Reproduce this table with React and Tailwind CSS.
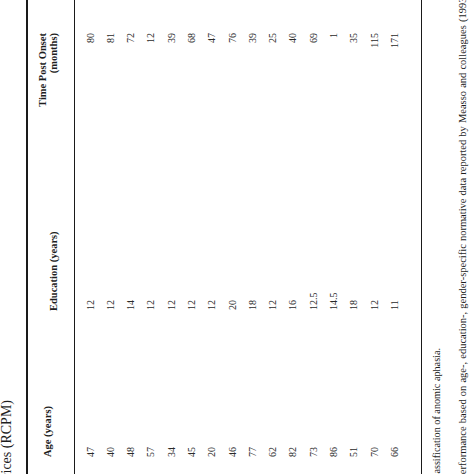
import React from 'react';

const rows = [
  ['47', '12', '80'],
  ['40', '12', '81'],
  ['48', '14', '72'],
  ['57', '12', '12'],
  ['34', '12', '39'],
  ['45', '12', '68'],
  ['20', '12', '47'],
  ['46', '20', '76'],
  ['77', '18', '39'],
  ['62', '12', '25'],
  ['82', '16', '40'],
  ['73', '12.5', '69'],
  ['86', '14.5', '1'],
  ['51', '18', '35'],
  ['70', '12', '115'],
  ['66', '11', '171'],
];

function Rule() {
  return <div className="h-[1.5px] bg-[#1a1a1a]" />;
}

export default function App() {
  return (
    <div className="w-[474px] h-[474px] overflow-hidden bg-white">
      <div className="w-[474px] h-[474px] -rotate-90 font-['Liberation_Serif',serif] text-[#1e1e1e]">
        {/* caption, clipped on the left */}
        <div className="flex justify-end w-[74px] h-[14px] text-[14px] leading-[14px] whitespace-nowrap">
          <span>Table 1. Demographic and clinical data of patients and performance on Raven&apos;s Coloured Progressive Matrices (RCPM)</span>
        </div>

        <div className="mt-[12px]">
          <Rule />
        </div>

        {/* header */}
        <div className="grid grid-cols-[146px_1fr_120px] items-end h-[46px] pl-[17px] pr-[33px] pb-[14.5px] text-[10.5px] leading-[11px] font-bold">
          <div className="mb-[6px]">Age (years)</div>
          <div>Education (years)</div>
          <div className="text-right">
            <div>Time Post Onset</div>
            <div>(months)</div>
          </div>
        </div>

        <Rule />

        {/* body */}
        <div className="pt-[5.5px]">
          {rows.map((r, i) => (
            <div
              key={i}
              className="grid grid-cols-[147px_1fr_80px] h-[20.3px] pl-[17px] pr-[33px] text-[10px] leading-[20.3px] text-[#2a2a2a]"
            >
              <div>{r[0]}</div>
              <div>{r[1]}</div>
              <div className="text-right">{r[2]}</div>
            </div>
          ))}
        </div>

        <div className="mt-[15.7px]">
          <Rule />
        </div>

        {/* notes */}
        <div className="mt-[9px] flex justify-end w-[126px] text-[10.2px] leading-[12px] whitespace-nowrap">
          <span>Classification of anomic aphasia.</span>
        </div>
        <div className="mt-[14px] ml-[-6px] text-[10.5px] leading-[12px] whitespace-nowrap [word-spacing:0.5px]">
          Performance based on age-, education-, gender-specific normative data reported by Measso and colleagues (1993).
        </div>
      </div>
    </div>
  );
}
